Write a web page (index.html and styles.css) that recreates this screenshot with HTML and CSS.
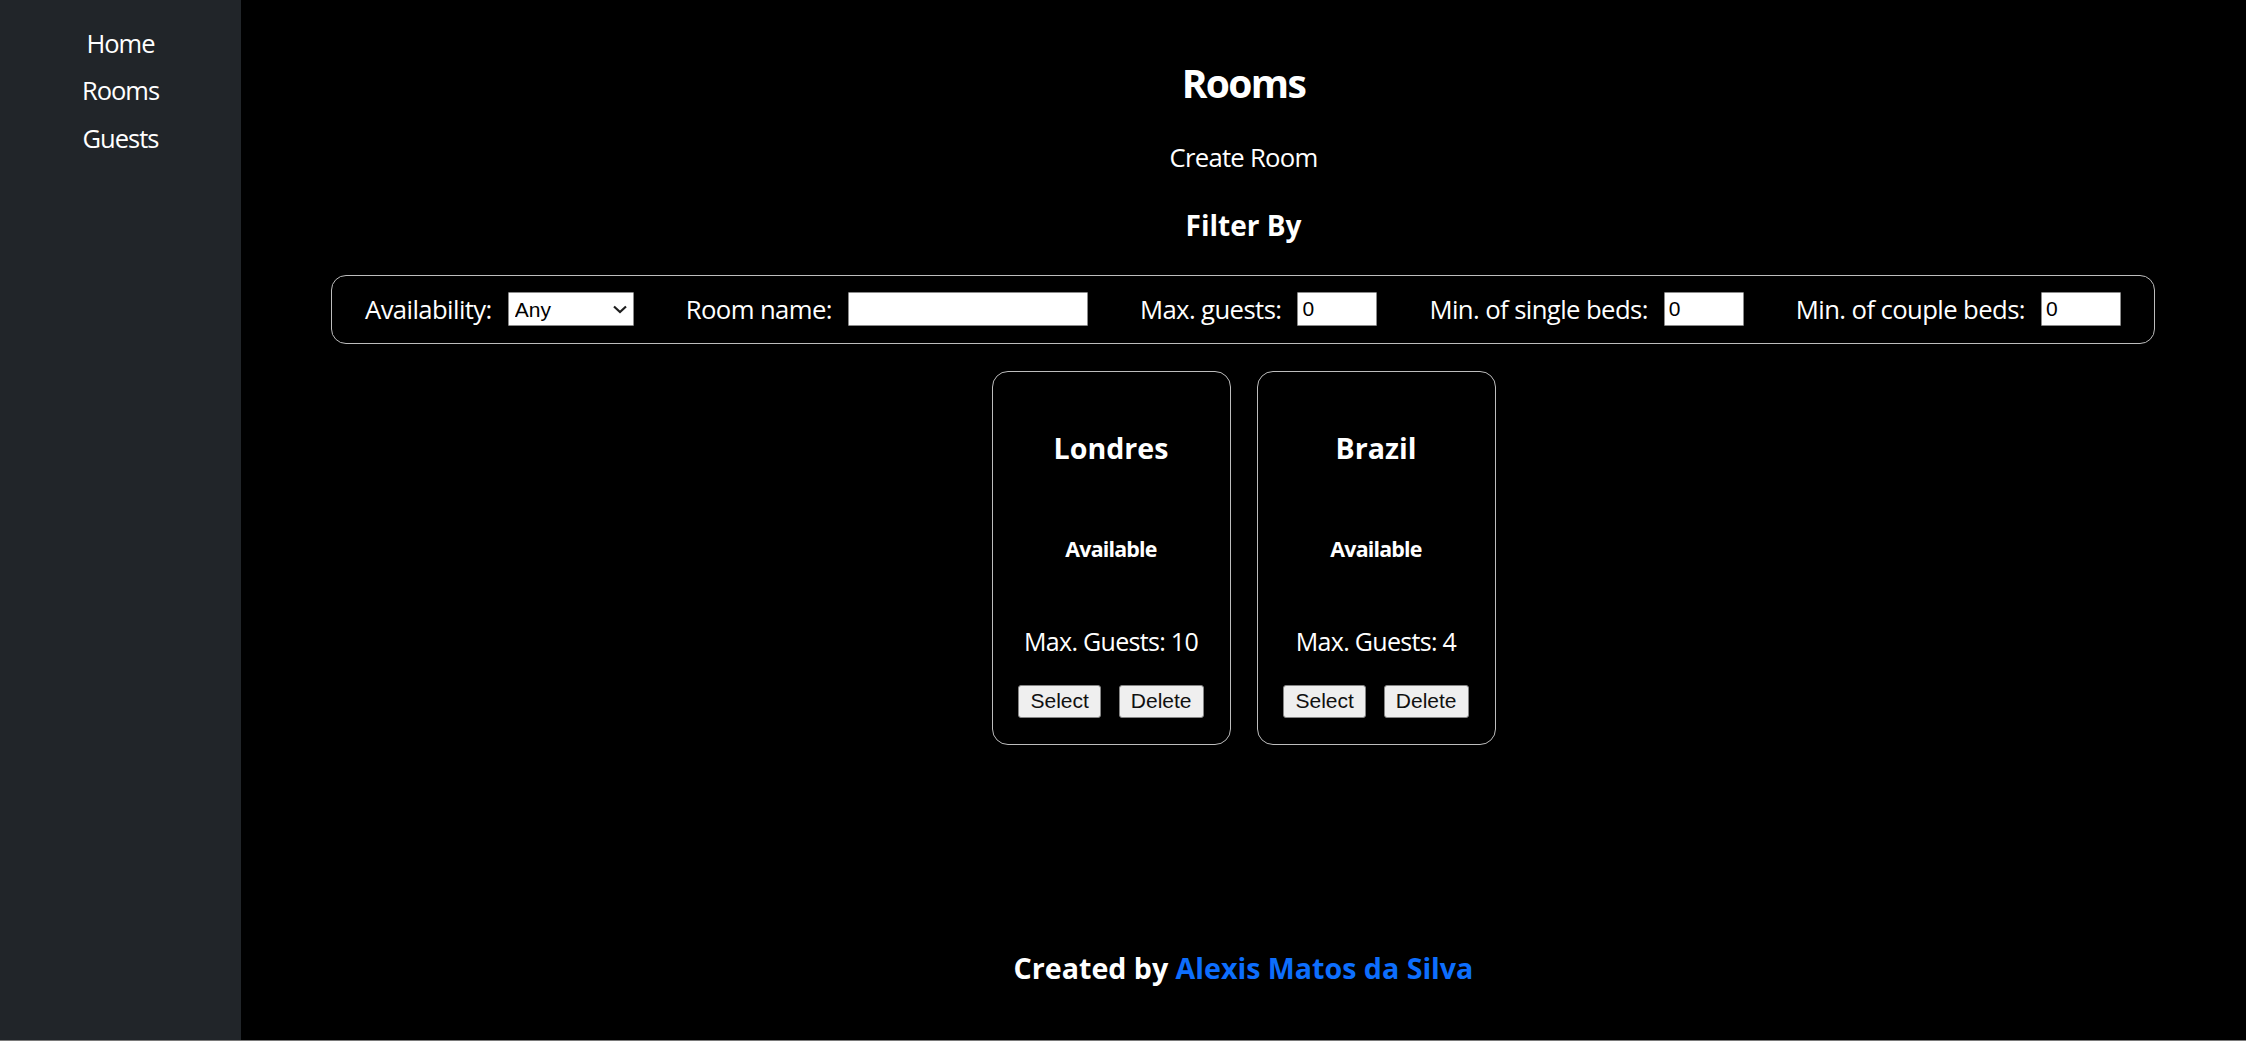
FILE: index.html
```html
<!DOCTYPE html>
<html lang="en">
<head>
<meta charset="utf-8">
<title>Rooms</title>
<link rel="stylesheet" href="styles.css">
</head>
<body>
<div class="app">
  <aside class="sidebar">
    <nav class="nav">
      <a class="nav-link" href="#">Home</a>
      <a class="nav-link" href="#">Rooms</a>
      <a class="nav-link" href="#">Guests</a>
    </nav>
  </aside>
  <main class="main">
    <h1 class="title">Rooms</h1>
    <a class="create" href="#">Create Room</a>
    <h3 class="filter-title">Filter By</h3>
    <form class="filters">
      <label class="field"><span>Availability:</span>
        <span class="select-wrap">
          <select class="control select"><option>Any</option><option>Available</option><option>Unavailable</option></select>
          <svg class="chev" width="16" height="9" viewBox="0 0 16 9"><path d="M2 1.5 L8 7 L14 1.5" fill="none" stroke="#1e1e1e" stroke-width="2.2"/></svg>
        </span>
      </label>
      <label class="field"><span>Room name:</span><input class="control input-wide" type="text"></label>
      <label class="field"><span>Max. guests:</span><input class="control input-num" type="text" value="0"></label>
      <label class="field"><span>Min. of single beds:</span><input class="control input-num" type="text" value="0"></label>
      <label class="field"><span>Min. of couple beds:</span><input class="control input-num" type="text" value="0"></label>
    </form>
    <section class="cards">
      <article class="card">
        <h2 class="card-name">Londres</h2>
        <p class="card-status">Available</p>
        <p class="card-guests">Max. Guests: 10</p>
        <div class="card-actions"><button class="btn" type="button">Select</button><button class="btn" type="button">Delete</button></div>
      </article>
      <article class="card">
        <h2 class="card-name">Brazil</h2>
        <p class="card-status">Available</p>
        <p class="card-guests">Max. Guests: 4</p>
        <div class="card-actions"><button class="btn" type="button">Select</button><button class="btn" type="button">Delete</button></div>
      </article>
    </section>
    <footer class="footer">Created by <a class="author" href="#">Alexis Matos da Silva</a></footer>
  </main>
</div>
</body>
</html>
```
FILE: styles.css
```css
html, body {
  margin: 0;
  padding: 0;
  background: #000;
}
body {
  font-family: "Open Sans", "Noto Sans", sans-serif;
  color: #fff;
}
.app {
  display: flex;
  height: 1040px;
  border-bottom: 1px solid #7a7a7a;
}
.sidebar {
  width: 241px;
  flex: none;
  background: #212529;
  padding-top: 20px;
  box-sizing: border-box;
}
.nav {
  display: flex;
  flex-direction: column;
}
.nav-link {
  display: block;
  text-align: center;
  color: #fff;
  text-decoration: none;
  font-size: 25.5px;
  letter-spacing: -1px;
  line-height: 47.4px;
}
.main {
  flex: 1;
  display: flex;
  flex-direction: column;
  min-width: 0;
}
.title {
  margin: 63.4px 0 0;
  font-size: 39px;
  letter-spacing: -1.6px;
  line-height: 1;
  font-weight: 700;
  text-align: center;
}
.create {
  align-self: center;
  margin-top: 42.8px;
  font-size: 25.7px;
  letter-spacing: -0.75px;
  line-height: 1;
  color: #fff;
  text-decoration: none;
}
.filter-title {
  margin: 40.2px 0 0;
  font-size: 28px;
  line-height: 1;
  font-weight: 700;
  text-align: center;
}
.filters {
  margin: 35.9px 91px 0 90px;
  height: 69px;
  box-sizing: border-box;
  border: 1px solid #bdbdbd;
  border-radius: 15px;
  display: flex;
  align-items: center;
  justify-content: space-between;
  padding: 0 33px;
}
.field {
  display: flex;
  align-items: center;
  gap: 16px;
  font-size: 25.7px;
  letter-spacing: -0.6px;
  line-height: 1;
}
.control {
  height: 34px;
  box-sizing: border-box;
  border: 1px solid #8a8a8a;
  border-radius: 1px;
  background: #fff;
  color: #000;
  font-family: "Liberation Sans", Arial, sans-serif;
  font-size: 21px;
  letter-spacing: 0;
  padding: 0 4px;
  margin: 0;
  outline: none;
}
.select-wrap {
  position: relative;
  display: inline-flex;
}
.select {
  width: 126px;
  appearance: none;
  -webkit-appearance: none;
  padding-left: 6px;
}
.chev {
  position: absolute;
  right: 6px;
  top: 13px;
  pointer-events: none;
}
.input-wide {
  width: 240px;
}
.input-num {
  width: 80px;
}
.cards {
  margin-top: 27px;
  display: flex;
  justify-content: center;
  gap: 26px;
}
.card {
  width: 239px;
  box-sizing: border-box;
  border: 1px solid #bdbdbd;
  border-radius: 16px;
  padding: 61.6px 0 26px;
  display: flex;
  flex-direction: column;
  align-items: center;
  text-align: center;
}
.card-name {
  margin: 0;
  font-size: 28.6px;
  line-height: 1;
  font-weight: 700;
}
.card-status {
  margin: 75.8px 0 0;
  font-size: 21.4px;
  letter-spacing: -0.8px;
  line-height: 1;
  font-weight: 700;
}
.card-guests {
  margin: 70px 0 0;
  font-size: 25px;
  letter-spacing: -0.7px;
  line-height: 1;
}
.card-actions {
  margin-top: 30.2px;
  display: flex;
  gap: 18px;
}
.btn {
  height: 33px;
  box-sizing: border-box;
  padding: 0 11px;
  background: #efefef;
  border: 1px solid #858585;
  border-radius: 3px;
  color: #111;
  font-family: "Liberation Sans", Arial, sans-serif;
  font-size: 21px;
}
.footer {
  margin-top: auto;
  margin-bottom: 57.5px;
  font-size: 28.6px;
  line-height: 1;
  font-weight: 700;
  text-align: center;
}
.author {
  color: #0d6efd;
  text-decoration: none;
}
```
